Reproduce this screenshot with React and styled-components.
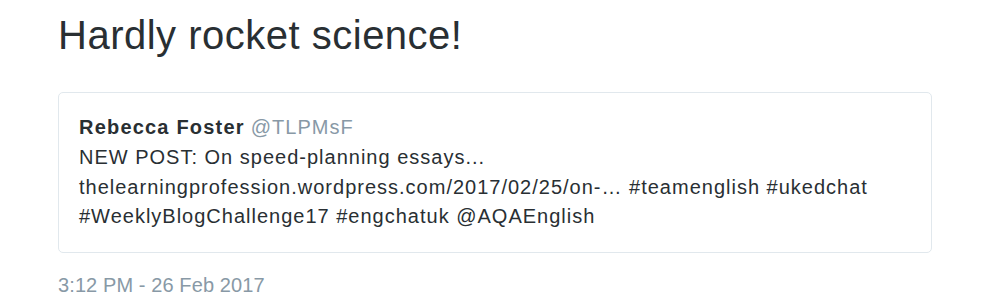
import React from 'react'
import styled, { createGlobalStyle } from 'styled-components'

const GlobalStyle = createGlobalStyle`
  html, body {
    margin: 0;
    padding: 0;
    background: #ffffff;
  }
  body {
    font-family: "Liberation Sans", Arial, sans-serif;
    color: #292f33;
  }
`

const Page = styled.div`
  width: 989px;
  height: 304px;
  padding: 0 57px 0 58px;
  box-sizing: border-box;
  overflow: hidden;
`

const Heading = styled.p`
  margin: 0;
  padding-top: 11px;
  font-size: 40px;
  line-height: 48px;
  letter-spacing: 0.5px;
  color: #292f33;
`

const QuoteCard = styled.div`
  margin-top: 33px;
  border: 1px solid #e1e8ed;
  border-radius: 5px;
  padding: 20px;
  font-size: 20px;
  letter-spacing: 1px;
`

const Author = styled.div`
  line-height: 28px;
  margin-bottom: 2px;
`

const Name = styled.b`
  font-weight: bold;
  color: #292f33;
  letter-spacing: 1.2px;
`

const Handle = styled.span`
  color: #8899a6;
  margin-left: 6px;
`

const Body = styled.div`
  line-height: 29.5px;
  color: #292f33;
`

const Timestamp = styled.div`
  margin-top: 18px;
  font-size: 20px;
  line-height: 28px;
  letter-spacing: 0.1px;
  color: #8899a6;
`

export default function App() {
  return (
    <>
      <GlobalStyle />
      <Page>
        <Heading>Hardly rocket science!</Heading>
        <QuoteCard>
          <Author>
            <Name>Rebecca Foster</Name>
            <Handle>@TLPMsF</Handle>
          </Author>
          <Body>
            NEW POST: On speed-planning essays...
            <br />
            thelearningprofession.wordpress.com/2017/02/25/on-… #teamenglish #ukedchat
            <br />
            #WeeklyBlogChallenge17 #engchatuk @AQAEnglish
          </Body>
        </QuoteCard>
        <Timestamp>3:12 PM - 26 Feb 2017</Timestamp>
      </Page>
    </>
  )
}
